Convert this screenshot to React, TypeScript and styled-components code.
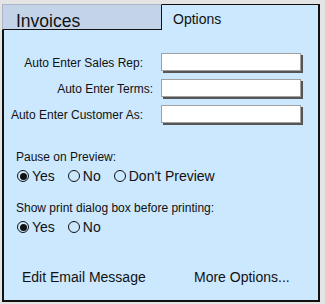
import React from "react";
import styled, { createGlobalStyle } from "styled-components";

const GlobalStyle = createGlobalStyle`
  html, body {
    margin: 0;
    padding: 0;
    background: #e4e4e4;
    font-family: "Liberation Sans", Arial, sans-serif;
    color: #111;
  }
`;

const Frame = styled.div`
  width: 318px;
  margin: 4px 0 0 2px;
`;

const TabRow = styled.div`
  display: flex;
  height: 26px;
`;

const Tab = styled.div<{ $active?: boolean }>`
  box-sizing: border-box;
  height: 26px;
  ${(p) =>
    p.$active
      ? `
    flex: 1;
    background: #cbe8ff;
    border-top: 1px solid #111;
    border-right: 2px solid #111;
    font-size: 14px;
    line-height: 14px;
    padding: 7px 0 0 11px;
  `
      : `
    width: 160px;
    background: #c3d3e8;
    border-top: 1px solid #aab6c6;
    border-left: 1px solid #aab6c6;
    border-right: 1px solid #111;
    border-bottom: 1px solid #111;
    font-size: 17.5px;
    line-height: 15px;
    padding: 9px 0 0 13px;
  `}
`;

const Panel = styled.div`
  box-sizing: border-box;
  height: 272px;
  background: #cbe8ff;
  border: 2px solid #111;
  border-top: none;
  padding-top: 23px;
`;

const FieldGrid = styled.div`
  display: grid;
  grid-template-columns: 139px 140px;
  column-gap: 18px;
  row-gap: 8px;
  font-size: 12px;
`;

const FieldLabel = styled.label<{ $nudge?: number }>`
  justify-self: end;
  align-self: center;
  padding-top: 2px;
  margin-right: ${(p) => -(p.$nudge ?? 0)}px;
  white-space: nowrap;
`;

const TextBox = styled.input`
  box-sizing: border-box;
  width: 140px;
  height: 18px;
  margin: 0;
  background: #fff;
  border: 1px solid #a0a0a0;
  box-shadow: 2px 2px 0 #555;
  outline: none;
`;

const Section = styled.div<{ $top: number }>`
  margin-top: ${(p) => p.$top}px;
  padding-left: 12px;
`;

const SectionLabel = styled.div`
  font-size: 12px;
  line-height: 14px;
  margin-bottom: 3px;
`;

const RadioRow = styled.div`
  display: flex;
  align-items: center;
  height: 18px;
  padding-left: 1px;
  font-size: 14px;
  line-height: 18px;
`;

const RadioOption = styled.label`
  display: flex;
  align-items: center;
  gap: 3px;
  margin-right: 13px;
`;

const RadioMark = styled.span<{ $checked?: boolean }>`
  box-sizing: border-box;
  position: relative;
  width: 12px;
  height: 12px;
  border-radius: 50%;
  border: ${(p) => (p.$checked ? "1.5px" : "1px")} solid #111;
  &::after {
    content: "";
    display: ${(p) => (p.$checked ? "block" : "none")};
    position: absolute;
    left: 50%;
    top: 50%;
    width: 7px;
    height: 7px;
    margin: -3.5px 0 0 -3.5px;
    border-radius: 50%;
    background: #111;
  }
`;

const ActionRow = styled.div`
  display: grid;
  grid-template-columns: 172px auto;
  margin-top: 32px;
  padding-left: 18px;
  font-size: 14px;
  line-height: 18px;
`;

const ActionLink = styled.span`
  cursor: pointer;
`;

type RadioGroupProps = { options: string[]; selected: string };

const RadioGroup: React.FC<RadioGroupProps> = ({ options, selected }) => (
  <RadioRow>
    {options.map((o) => (
      <RadioOption key={o}>
        <RadioMark $checked={o === selected} />
        {o}
      </RadioOption>
    ))}
  </RadioRow>
);

const App: React.FC = () => {
  return (
    <Frame>
      <GlobalStyle />
      <TabRow>
        <Tab>Invoices</Tab>
        <Tab $active>Options</Tab>
      </TabRow>
      <Panel>
        <FieldGrid>
          <FieldLabel>Auto Enter Sales Rep:</FieldLabel>
          <TextBox />
          <FieldLabel $nudge={10}>Auto Enter Terms:</FieldLabel>
          <TextBox />
          <FieldLabel>Auto Enter Customer As:</FieldLabel>
          <TextBox />
        </FieldGrid>
        <Section $top={27}>
          <SectionLabel>Pause on Preview:</SectionLabel>
          <RadioGroup options={["Yes", "No", "Don't Preview"]} selected="Yes" />
        </Section>
        <Section $top={16}>
          <SectionLabel>Show print dialog box before printing:</SectionLabel>
          <RadioGroup options={["Yes", "No"]} selected="Yes" />
        </Section>
        <ActionRow>
          <ActionLink>Edit Email Message</ActionLink>
          <ActionLink>More Options...</ActionLink>
        </ActionRow>
      </Panel>
    </Frame>
  );
};

export default App;
